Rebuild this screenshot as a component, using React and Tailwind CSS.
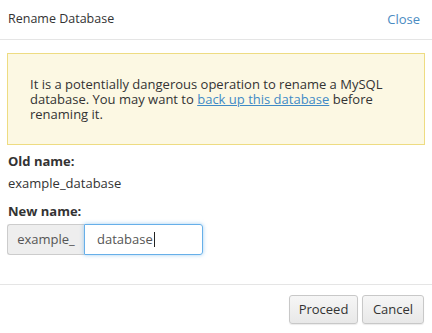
import React from 'react';

const RenameDatabase = () => {
  return (
    <div className="w-[432px] h-[333px] bg-white text-[#333] text-[13px] font-['Open_Sans',sans-serif] flex flex-col">
      <div className="h-[40px] border-b border-[#e5e5e5] flex items-center justify-between px-2 shrink-0">
        <h2 className="text-[12.5px] font-normal">Rename Database</h2>
        <a href="#" className="text-[#4a8bc2] pr-[4px]">Close</a>
      </div>

      <div className="px-[7px] pt-[13px] grow">
        <div className="bg-[#fcf8e3] border border-[#eedc82] pl-[22px] pr-4 pt-[23px] pb-[22px] leading-[15px]">
          It is a potentially dangerous operation to rename a MySQL
          <br />
          database. You may want to{' '}
          <a href="#" className="text-[#3f8ac6] underline">back up this database</a> before
          <br />
          renaming it.
        </div>

        <div className="mt-[8px] px-[1px]">
          <p className="font-bold leading-[16px]">Old name:</p>
          <p className="mt-[6px] leading-[16px]">example_database</p>
          <p className="font-bold mt-[12px] leading-[16px]">New name:</p>
        </div>

        <div className="flex mt-[5px] h-[31px]">
          <span className="w-[77px] flex items-center justify-center bg-[#eeeeee] border border-[#cccccc] border-r-0 rounded-l-[3px] text-[#555]">
            example_
          </span>
          <div className="w-[119px] flex items-center pl-[12px] border border-[#66afe9] rounded-r-[3px] shadow-[0_0_4px_rgba(102,175,233,0.6)] text-[#555]">
            database<span className="inline-block w-px h-[15px] bg-[#222] ml-px" />
          </div>
        </div>
      </div>

      <div className="border-t border-[#e5e5e5] h-[49px] flex items-start justify-end gap-[4px] pt-[10px] pr-[8px] shrink-0">
        <button className="h-[29px] w-[69px] bg-gradient-to-b from-[#f6f6f6] to-[#e8e8e8] border border-[#c8c8c8] rounded-[3px] text-[#333] shadow-[0_1px_1px_rgba(0,0,0,0.08)]">
          Proceed
        </button>
        <button className="h-[29px] w-[62px] bg-gradient-to-b from-[#f6f6f6] to-[#e8e8e8] border border-[#c8c8c8] rounded-[3px] text-[#333] shadow-[0_1px_1px_rgba(0,0,0,0.08)]">
          Cancel
        </button>
      </div>
    </div>
  );
};

export default RenameDatabase;
